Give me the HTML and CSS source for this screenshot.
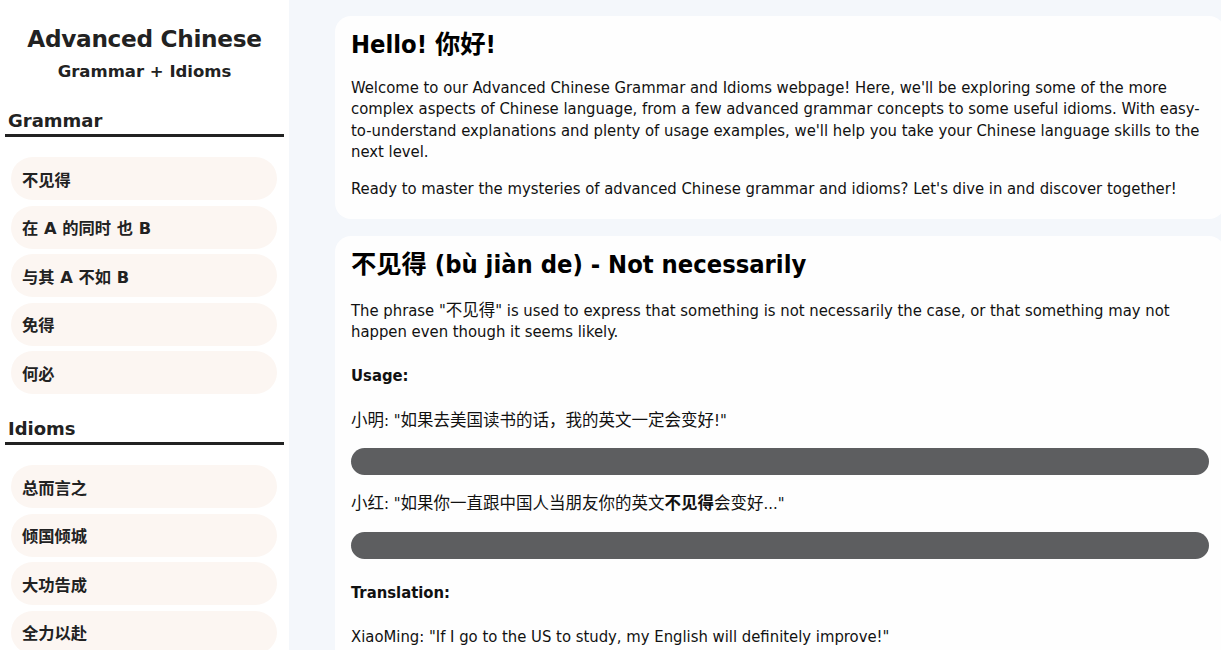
FILE: index.html
```html
<!DOCTYPE html>
<html lang="zh">
<head>
<meta charset="utf-8">
<title>Advanced Chinese</title>
<link rel="stylesheet" href="styles.css">
</head>
<body>
<div class="page">
  <aside class="sidebar">
    <div class="brand">
      <h1 class="brand-title">Advanced Chinese</h1>
      <div class="brand-sub">Grammar + Idioms</div>
    </div>
    <h3 class="nav-heading">Grammar</h3>
    <ul class="nav-list">
      <li class="nav-item">不见得</li>
      <li class="nav-item">在 A 的同时 也 B</li>
      <li class="nav-item">与其 A 不如 B</li>
      <li class="nav-item">免得</li>
      <li class="nav-item">何必</li>
    </ul>
    <h3 class="nav-heading">Idioms</h3>
    <ul class="nav-list">
      <li class="nav-item">总而言之</li>
      <li class="nav-item">倾国倾城</li>
      <li class="nav-item">大功告成</li>
      <li class="nav-item">全力以赴</li>
    </ul>
  </aside>
  <main class="main">
    <section class="card">
      <h2 class="card-title">Hello! 你好!</h2>
      <p class="text">Welcome to our Advanced Chinese Grammar and Idioms webpage! Here, we'll be exploring some of the more complex aspects of Chinese language, from a few advanced grammar concepts to some useful idioms. With easy-to-understand explanations and plenty of usage examples, we'll help you take your Chinese language skills to the next level.</p>
      <p class="text">Ready to master the mysteries of advanced Chinese grammar and idioms? Let's dive in and discover together!</p>
    </section>
    <section class="card">
      <h2 class="card-title">不见得 (bù jiàn de) - Not necessarily</h2>
      <p class="text">The phrase "不见得" is used to express that something is not necessarily the case, or that something may not happen even though it seems likely.</p>
      <p class="text label">Usage:</p>
      <p class="text line">小明: "如果去美国读书的话，我的英文一定会变好!"</p>
      <div class="spoiler"></div>
      <p class="text line">小红: "如果你一直跟中国人当朋友你的英文<strong>不见得</strong>会变好..."</p>
      <div class="spoiler"></div>
      <p class="text label">Translation:</p>
      <p class="text line">XiaoMing: "If I go to the US to study, my English will definitely improve!"</p>
    </section>
  </main>
</div>
</body>
</html>
```

FILE: styles.css
```css
html, body {
  margin: 0;
  padding: 0;
}
body {
  font-family: "DejaVu Sans", "Noto Sans CJK SC", sans-serif;
  color: #111;
  background: #f4f7fb;
  overflow: hidden;
}
.page {
  display: flex;
  min-height: 650px;
}
.sidebar {
  width: 279px;
  flex: none;
  background: #ffffff;
  padding: 0 5px;
  color: #222;
}
.brand {
  text-align: center;
  padding-top: 24px;
  margin-bottom: 26px;
}
.brand-title {
  margin: 0;
  font-size: 23.2px;
  line-height: 30px;
  font-weight: bold;
  letter-spacing: -0.3px;
}
.brand-sub {
  font-size: 16.5px;
  font-weight: bold;
  line-height: 22px;
  margin-top: 7px;
}
.nav-heading {
  margin: 0;
  padding: 0 3px 1px;
  font-size: 18px;
  line-height: 24px;
  font-weight: bold;
  border-bottom: 3px solid #222;
}
.nav-list {
  list-style: none;
  margin: 20px 0 23px;
  padding: 0 7px 0 6px;
  display: flex;
  flex-direction: column;
  gap: 5.5px;
}
.nav-item {
  height: 43px;
  display: flex;
  align-items: center;
  padding: 0 11px;
  border-radius: 22px;
  background: #fcf6f2;
  font-size: 16.3px;
  font-weight: bold;
}
.main {
  flex: 1;
  padding: 16px 0 0 46px;
  display: flex;
  flex-direction: column;
  gap: 17px;
  min-width: 0;
}
.card {
  width: 858px;
  background: #fefefe;
  border-radius: 16px;
  padding: 14px 16px 19px;
}
.card-title {
  margin: 0 0 17px;
  font-family: "DejaVu Sans Condensed", "DejaVu Sans", "Noto Sans CJK SC", sans-serif;
  font-stretch: condensed;
  font-size: 25.3px;
  line-height: 30px;
  font-weight: bold;
  color: #000;
}
.card + .card .card-title {
  margin-bottom: 20px;
}
.text {
  margin: 16px 0 0;
  font-family: "DejaVu Sans Condensed", "DejaVu Sans", "Noto Sans CJK SC", sans-serif;
  font-stretch: condensed;
  font-size: 16.5px;
  line-height: 21.33px;
}
.card-title + .text {
  margin-top: 0;
}
.label {
  font-weight: bold;
  margin-top: 23px;
}
.line {
  margin-top: 23px;
}
.spoiler {
  height: 27px;
  border-radius: 14px;
  background: #5d5e60;
  margin-top: 17.5px;
}
.spoiler + .line {
  margin-top: 17.5px;
}
```
